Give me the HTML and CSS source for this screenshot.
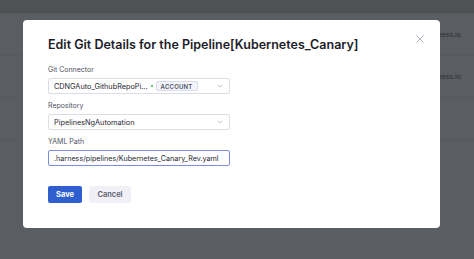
FILE: index.html
```html
<!DOCTYPE html>
<html lang="en">
<head>
<meta charset="utf-8">
<title>Edit Git Details</title>
<link rel="stylesheet" href="styles.css">
</head>
<body>
<div class="page">
  <div class="topbar"></div>
  <div class="row"><span class="cell">automation@harness.io</span></div>
  <div class="row"><span class="cell">automation@harness.io</span></div>
  <div class="row"></div>
</div>

<div class="overlay">
  <div class="dialog">
    <button class="close" aria-label="Close">
      <svg viewBox="0 0 8 8" width="8" height="8"><path d="M0.5 0.5 L7.5 7.5 M7.5 0.5 L0.5 7.5" stroke="#a7a9b6" stroke-width="0.9" fill="none"/></svg>
    </button>
    <h2 class="title">Edit Git Details for the Pipeline[Kubernetes_Canary]</h2>

    <div class="field">
      <label class="label">Git Connector</label>
      <div class="select">
        <span class="value">CDNGAuto_GithubRepoPi...</span>
        <span class="dot"></span>
        <span class="badge">ACCOUNT</span>
        <svg class="chev" viewBox="0 0 6 4" width="6" height="4"><path d="M0.6 0.7 L3 3.1 L5.4 0.7" stroke="#b4b6c6" stroke-width="0.8" fill="none"/></svg>
      </div>
    </div>

    <div class="field">
      <label class="label">Repository</label>
      <div class="select">
        <span class="value">PipelinesNgAutomation</span>
        <svg class="chev" viewBox="0 0 6 4" width="6" height="4"><path d="M0.6 0.7 L3 3.1 L5.4 0.7" stroke="#b4b6c6" stroke-width="0.8" fill="none"/></svg>
      </div>
    </div>

    <div class="field last">
      <label class="label">YAML Path</label>
      <div class="input">.harness/pipelines/Kubernetes_Canary_Rev.yaml</div>
    </div>

    <div class="actions">
      <button class="btn primary">Save</button>
      <button class="btn secondary">Cancel</button>
    </div>
  </div>
</div>
</body>
</html>
```

FILE: styles.css
```css
html, body {
  margin: 0;
  padding: 0;
}

body {
  width: 474px;
  height: 259px;
  overflow: hidden;
  background: #5a5d61;
  font-family: Inter, "Noto Sans", sans-serif;
}

.page {
  display: flex;
  flex-direction: column;
}

.topbar {
  height: 13px;
  background: #4f5255;
  border-bottom: 1px solid #55585c;
}

.row {
  height: 41px;
  border-bottom: 1px solid #56595d;
  display: flex;
  align-items: center;
  justify-content: flex-end;
  padding-right: 13px;
}

.cell {
  font-size: 7px;
  color: #2e3033;
}

.overlay {
  position: fixed;
  inset: 0;
  padding: 20px 0 0 23px;
}

.dialog {
  position: relative;
  box-sizing: border-box;
  width: 417px;
  height: 208px;
  padding: 17px 25px 0;
  background: #ffffff;
  border-radius: 4px;
}

.close {
  position: absolute;
  top: 15px;
  right: 16px;
  width: 8px;
  height: 8px;
  padding: 0;
  border: 0;
  background: none;
  display: flex;
}

.title {
  margin: 0 0 12px;
  font-size: 12.5px;
  line-height: 16px;
  font-weight: 600;
  color: #1c1c28;
}

.field {
  display: flex;
  flex-direction: column;
  margin-bottom: 7px;
}

.field.last {
  margin-bottom: 20px;
}

.label {
  font-size: 7px;
  line-height: 10px;
  color: #4f5162;
  margin-bottom: 3px;
}

.select,
.input {
  box-sizing: border-box;
  width: 182px;
  height: 16px;
  display: flex;
  align-items: center;
  padding: 0 5px;
  border: 1px solid #dcdde6;
  border-radius: 2px;
  background: #fff;
  font-size: 7.3px;
  color: #26262f;
}

.input {
  border-color: #7d8fd8;
  font-size: 7.2px;
}

.value {
  white-space: nowrap;
}

.dot {
  width: 2px;
  height: 2px;
  border-radius: 50%;
  background: #42ab45;
  margin-left: 3px;
}

.badge {
  margin-left: 3px;
  height: 10px;
  box-sizing: border-box;
  padding: 0 4px;
  display: flex;
  align-items: center;
  border: 1px solid #dadbe8;
  border-radius: 2px;
  background: #f3f4fb;
  font-size: 6px;
  font-weight: 600;
  letter-spacing: 0.2px;
  color: #4f5162;
}

.chev {
  margin-left: auto;
  margin-right: 1px;
}

.actions {
  display: flex;
  gap: 7px;
}

.btn {
  height: 17px;
  border: 0;
  border-radius: 2px;
  font-family: Inter, "Noto Sans", sans-serif;
  font-size: 7.5px;
  font-weight: 700;
  padding: 0;
}

.primary {
  width: 34px;
  background: #2f5fcf;
  color: #fff;
}

.secondary {
  width: 42px;
  background: #f0f0f6;
  color: #5b5d6e;
  font-weight: 600;
}
```
